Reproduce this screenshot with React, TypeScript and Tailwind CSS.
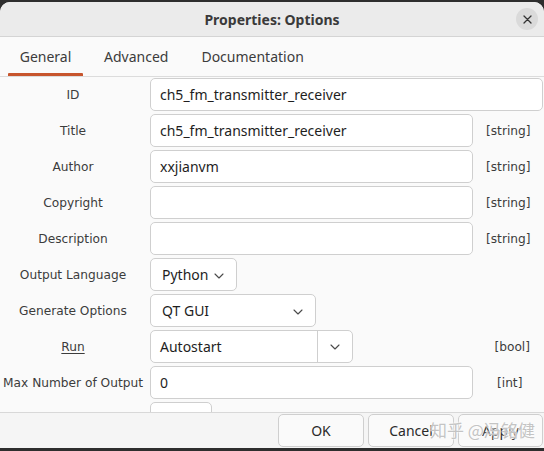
import React from "react";

const Chevron = ({ className = "" }: { className?: string }) => (
  <svg width="10" height="6" viewBox="0 0 10 6" className={className} fill="none">
    <path d="M1 1l4 4 4-4" stroke="#4a4a4a" strokeWidth="1.1" strokeLinecap="round" strokeLinejoin="round" />
  </svg>
);

const Label = ({ children, underline = false }: { children: React.ReactNode; underline?: boolean }) => (
  <div
    className={`w-[146px] shrink-0 pt-[2px] text-center text-[12.2px] text-[#3c3c3c] ${underline ? "underline underline-offset-2" : ""}`}
    style={{ fontFamily: '"DejaVu Sans", sans-serif' }}
  >
    {children}
  </div>
);

const Type = ({ children }: { children: React.ReactNode }) => (
  <div
    className="ml-[13px] pt-[2px] text-[12.2px] text-[#3c3c3c]"
    style={{ fontFamily: '"DejaVu Sans", sans-serif' }}
  >
    {children}
  </div>
);

const Field = ({ value, w }: { value: string; w: string }) => (
  <div
    className={`${w} h-[33px] rounded-[5px] border border-[#cfcfcf] bg-white flex items-center px-[9px] text-[14px] text-[#1e1e1e]`}
  >
    {value}
  </div>
);

export default function App() {
  return (
    <div
      className="w-[544px] h-[451px] bg-[#2e2e2e] relative overflow-hidden"
      style={{ fontFamily: '"Noto Sans", "Open Sans", sans-serif' }}
    >
      <div className="mt-[2px] h-[446px] rounded-t-[10px] bg-[#fafafa] flex flex-col overflow-hidden">
        {/* Header */}
        <div className="h-[35px] shrink-0 bg-[#ebebeb] border-b border-[#d4d4d4] flex items-center justify-center relative">
          <span className="text-[14px] font-bold text-[#3a3a3a]">Properties: Options</span>
          <div className="absolute right-[6px] top-[6px] w-[22px] h-[22px] rounded-full bg-[#dadada] flex items-center justify-center">
            <svg width="9" height="9" viewBox="0 0 9 9">
              <path d="M1 1l7 7M8 1l-7 7" stroke="#333" strokeWidth="1.3" strokeLinecap="round" />
            </svg>
          </div>
        </div>

        {/* Tabs */}
        <div className="h-[40px] shrink-0 border-b border-[#dcdcdc] flex items-stretch pl-[8px] text-[14px] text-[#3c3c3c]">
          <div className="w-[75px] flex flex-col">
            <div className="flex-1 flex items-center justify-center pt-[2px]">General</div>
            <div className="h-[3px] bg-[#c7552d] rounded-t-[1px]" />
          </div>
          <div className="ml-[21px] flex items-center pt-[2px] pb-[3px]">Advanced</div>
          <div className="ml-[33px] flex items-center pt-[2px] pb-[3px]">Documentation</div>
        </div>

        {/* Content */}
        <div className="flex-1 overflow-hidden flex flex-col gap-[3px] pt-[1px]">
          <div className="flex items-center h-[33px] shrink-0">
            <Label>ID</Label>
            <div className="ml-[4px]">
              <Field value="ch5_fm_transmitter_receiver" w="w-[393px]" />
            </div>
          </div>
          <div className="flex items-center h-[33px] shrink-0">
            <Label>Title</Label>
            <div className="ml-[4px]">
              <Field value="ch5_fm_transmitter_receiver" w="w-[323px]" />
            </div>
            <Type>[string]</Type>
          </div>
          <div className="flex items-center h-[33px] shrink-0">
            <Label>Author</Label>
            <div className="ml-[4px]">
              <Field value="xxjianvm" w="w-[323px]" />
            </div>
            <Type>[string]</Type>
          </div>
          <div className="flex items-center h-[33px] shrink-0">
            <Label>Copyright</Label>
            <div className="ml-[4px]">
              <Field value="" w="w-[323px]" />
            </div>
            <Type>[string]</Type>
          </div>
          <div className="flex items-center h-[33px] shrink-0">
            <Label>Description</Label>
            <div className="ml-[4px]">
              <Field value="" w="w-[323px]" />
            </div>
            <Type>[string]</Type>
          </div>
          <div className="flex items-center h-[33px] shrink-0">
            <Label>Output Language</Label>
            <div className="ml-[4px] w-[87px] h-[33px] rounded-[5px] border border-[#cfcfcf] bg-white flex items-center pl-[11px] text-[14px] text-[#1e1e1e]">
              Python
              <Chevron className="ml-[6px] mt-[2px]" />
            </div>
          </div>
          <div className="flex items-center h-[33px] shrink-0">
            <Label>Generate Options</Label>
            <div className="ml-[4px] w-[166px] h-[33px] rounded-[5px] border border-[#cfcfcf] bg-white flex items-center justify-between pl-[11px] pr-[12px] text-[14px] text-[#1e1e1e]">
              QT GUI
              <Chevron className="mt-[2px]" />
            </div>
          </div>
          <div className="flex items-center h-[33px] shrink-0">
            <Label underline>Run</Label>
            <div className="ml-[4px] w-[203px] h-[33px] rounded-[5px] border border-[#cfcfcf] bg-white flex items-stretch text-[14px] text-[#1e1e1e]">
              <div className="flex-1 flex items-center pl-[9px]">Autostart</div>
              <div className="w-[35px] border-l border-[#cfcfcf] flex items-center justify-center">
                <Chevron className="mt-[1px]" />
              </div>
            </div>
            <div className="ml-auto mr-[14px] pt-[2px] text-[12.2px] text-[#3c3c3c]" style={{ fontFamily: '"DejaVu Sans", sans-serif' }}>
              [bool]
            </div>
          </div>
          <div className="flex items-center h-[33px] shrink-0">
            <Label>Max Number of Output</Label>
            <div className="ml-[4px]">
              <Field value="0" w="w-[323px]" />
            </div>
            <div className="ml-[24px] pt-[2px] text-[12.2px] text-[#3c3c3c]" style={{ fontFamily: '"DejaVu Sans", sans-serif' }}>
              [int]
            </div>
          </div>
          <div className="flex items-center h-[33px] shrink-0">
            <div className="w-[146px] shrink-0" />
            <div className="ml-[4px] w-[62px] h-[33px] rounded-[5px] border border-[#cfcfcf] bg-white" />
          </div>
        </div>

        {/* Footer */}
        <div className="h-[36px] shrink-0 bg-[#f5f5f5] border-t border-[#d8d8d8] flex items-start justify-end pt-[1px] pr-[1px] gap-[4px] relative">
          <div className="w-[86px] h-[33px] rounded-[5px] border border-[#cfcfcf] bg-[#fafafa] flex items-center justify-center text-[14px] text-[#2a2a2a]">
            OK
          </div>
          <div className="w-[86px] h-[33px] rounded-[5px] border border-[#cfcfcf] bg-[#fafafa] flex items-center justify-center text-[14px] text-[#2a2a2a]">
            Cancel
          </div>
          <div className="w-[85px] h-[33px] rounded-[5px] border border-[#cfcfcf] bg-[#fafafa] flex items-center justify-center text-[14px] text-[#2a2a2a]">
            Apply
          </div>
          <div
            className="absolute left-[430px] top-[4px] text-[17px] text-[#c4c4c4] whitespace-nowrap"
            style={{
              fontFamily: '"Noto Sans CJK SC", sans-serif',
              textShadow: "0 0 2px #ffffff, 0 0 2px #ffffff",
            }}
          >
            知乎 @冯铭健
          </div>
        </div>
      </div>
    </div>
  );
}
